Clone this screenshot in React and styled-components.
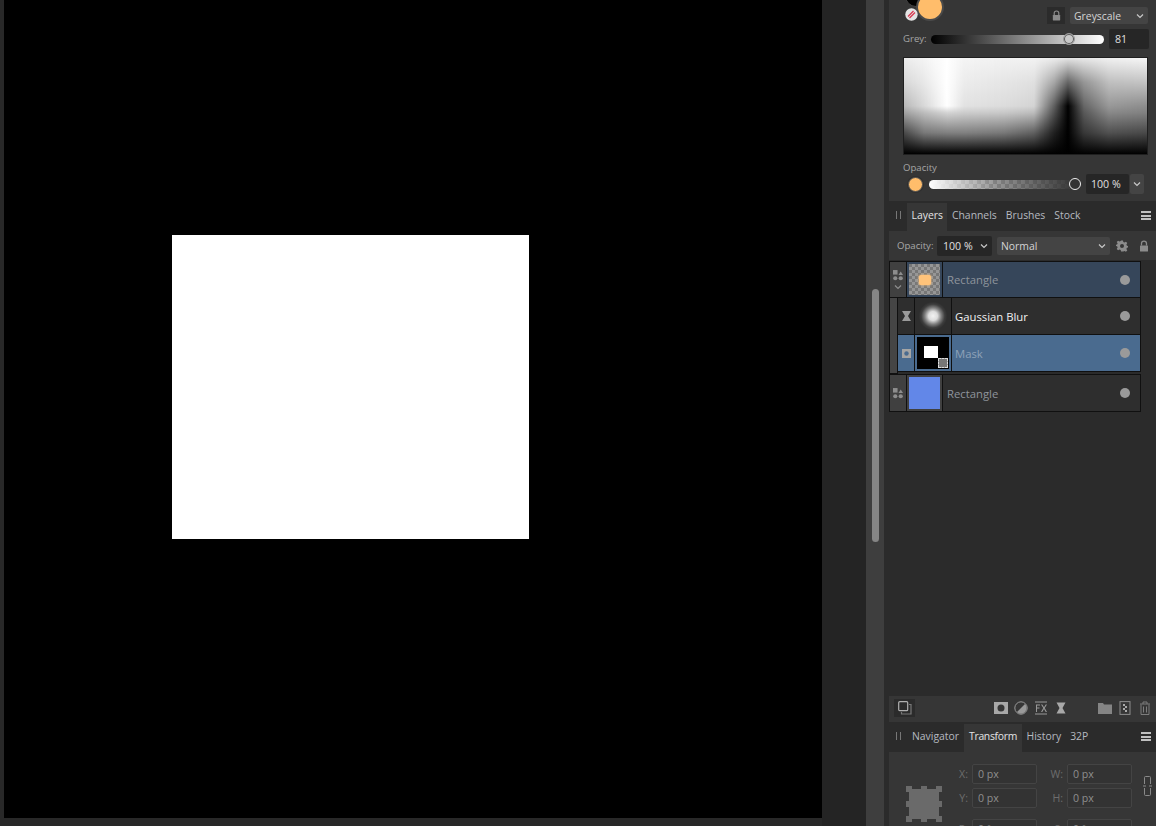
import React from "react";
import styled, { createGlobalStyle, css } from "styled-components";

const Global = createGlobalStyle`
  html, body { margin: 0; padding: 0; background: #2b2b2b; }
  * { box-sizing: border-box; }
  body { font-family: "Open Sans", "Noto Sans", "Liberation Sans", sans-serif; font-size: 10.4px; }
`;

const checker = (a, b, s) => css`
  background-color: ${a};
  background-image: conic-gradient(${b} 25%, transparent 0 50%, ${b} 0 75%, transparent 0);
  background-size: ${s}px ${s}px;
`;

const Root = styled.div`
  width: 1156px; height: 826px; display: flex; overflow: hidden; background: #232323;
`;
const CanvasColumn = styled.div`
  width: 822px; height: 826px; flex: none; padding: 0 0 8px 4px; background: #282828;
`;
const Canvas = styled.div`
  width: 818px; height: 818px; background: #000; padding: 235px 0 0 168px;
`;
const Page = styled.div`width: 357px; height: 304px; background: #fff;`;
const Gutter = styled.div`width: 44px; flex: none; background: #242424;`;
const ScrollTrack = styled.div`width: 18px; flex: none; background: #3e3e3e; padding: 289px 6px 0;`;
const ScrollThumb = styled.div`width: 7px; height: 253px; border-radius: 3.5px; background: #858585;`;
const Seam = styled.div`width: 5px; flex: none; background: #2b2b2b;`;
const Side = styled.div`width: 267px; height: 826px; flex: none; display: flex; flex-direction: column; background: #2b2b2b;`;

const ColourPanel = styled.section`height: 201px; flex: none; background: #363636; padding: 0 7px 0 14px; overflow: hidden;`;
const ColourTop = styled.div`height: 29px; display: flex; align-items: flex-start; padding-top: 7px;`;
const Swatches = styled.div`position: relative; width: 144px; height: 22px; flex: none;`;
const BackSwatch = styled.div`position: absolute; left: 2px; top: -22px; width: 22px; height: 22px; border-radius: 50%; background: #000; border: 1px solid #444;`;
const FrontSwatch = styled.div`position: absolute; left: 13px; top: -14px; width: 28px; height: 28px; border-radius: 50%; background: #ffbd6b; border: 2px solid #4a4a4a;`;
const NoneSwatch = styled.svg`position: absolute; left: 2px; top: 1px; width: 13px; height: 13px;`;
const LockBox = styled.div`width: 18px; height: 17px; display: flex; align-items: center; justify-content: center; background: #2b2b2b; margin-right: 5px;`;
const ModeSelect = styled.div`
  width: 78px; height: 17px; background: #444; color: #d4d4d4; padding: 0 4px; display: flex; align-items: center; justify-content: space-between; border-radius: 2px;
`;
const GreyRow = styled.div`height: 20px; display: flex; align-items: center;`;
const SmallLabel = styled.span`
  color: ${p => p.$c || "#a5a5a5"}; font-size: ${p => p.$s || 9.6}px; line-height: 12px; white-space: nowrap;
  width: ${p => p.$w ? `${p.$w}px` : "auto"}; flex: none;
`;
const GreyTrack = styled.div`
  position: relative; width: 173px; height: 9px; flex: none; border-radius: 4.5px; background: linear-gradient(90deg, #000, #fff);
`;
const GreyKnob = styled.div`
  position: absolute; left: 132px; top: -2px; width: 12px; height: 12px; border-radius: 50%; border: 1.5px solid #9a9a9a; background: #c8c8c8; box-shadow: inset 0 0 0 1px #555;
`;
const ValueBox = styled.div`
  width: ${p => p.$w}px; height: 20px; flex: none; background: #262626; color: #e0e0e0; border-radius: 2px; display: flex; align-items: center; justify-content: ${p => p.$between ? "space-between" : "flex-start"}; padding: 0 5px; font-size: 10.6px;
`;
const GreyValue = styled(ValueBox)`margin-left: 5px; padding-left: 6px;`;
const Picture = styled.svg`display: block; width: 245px; height: 98px; margin-top: 8px; border: 1px solid #1f1f1f;`;
const OpacityHead = styled.div`margin-top: 5px; height: 14px;`;
const OpacityRow = styled.div`height: 20px; display: flex; align-items: center;`;
const OpacityDot = styled.div`width: 15px; height: 15px; margin-left: 5px; border-radius: 50%; background: #ffbd6b; border: 1.5px solid #4f4f4f; box-shadow: 0 0 0 1px #2f2f2f; flex: none;`;
const OpacityTrack = styled.div`
  position: relative; width: 146px; height: 9px; margin-left: 6px; margin-right: 11px; border-radius: 4.5px; flex: none;
  background: linear-gradient(90deg, #fff, rgba(170,170,170,.35) 45%, rgba(50,50,50,.95)), repeating-conic-gradient(#8f8f8f 0 25%, #6b6b6b 0 50%) 0 0 / 8px 8px;
`;
const OpacityKnob = styled.div`
  position: absolute; right: -6px; top: -2px; width: 12px; height: 12px; border-radius: 50%; border: 1.5px solid #eee; background: #333;
`;
const DropButton = styled.div`width: 14px; height: 20px; margin-left: 1px; background: #444; display: flex; align-items: center; justify-content: center; border-radius: 2px;`;

const TabBar = styled.div`height: 30px; flex: none; display: flex; align-items: flex-end; background: #2b2b2b; padding-left: 7px; padding-right: 5px;`;
const Grip = styled.div`width: 5px; height: 8px; margin-bottom: 12px; border-left: 1px solid #777; border-right: 1px solid #777; margin-right: 6px; flex: none;`;
const Tab = styled.div`
  height: 28px; padding: 0 ${p => p.$pad ?? 5}px 4px; display: flex; align-items: center; font-size: 10.4px; white-space: nowrap;
  letter-spacing: ${p => p.$track || 0}px;
  color: ${p => p.$on ? "#e4e4e4" : "#b6bac0"}; background: ${p => p.$on ? "#363636" : "transparent"};
`;
const Burger = styled.div`
  margin-left: auto; margin-bottom: 11px; width: 10px; height: 9px; flex: none;
  border-top: 2px solid #c0c0c0; border-bottom: 2px solid #c0c0c0; position: relative;
  &::after { content: ""; position: absolute; left: 0; right: 0; top: 1.5px; height: 2px; background: #c0c0c0; }
`;

const Options = styled.div`height: 29px; flex: none; background: #363636; display: flex; align-items: center; padding-left: 8px;`;
const OpacityInput = styled(ValueBox)`margin-left: 4px; padding: 0 4px 0 6px;`;
const BlendSelect = styled(ModeSelect)`width: 113px; height: 18px; margin-left: 5px;`;
const OptionIcon = styled.svg`width: 12px; height: 12px; margin-left: ${p => p.$ml}px; flex: none;`;

const List = styled.div`flex: 1; min-height: 0; padding-top: 1px; display: flex; flex-direction: column; background: #2b2b2b;`;
const LayerRow = styled.div`
  width: 252px; height: ${p => p.$h || 37}px; flex: none; display: flex; align-items: stretch;
  border: 1px solid #101010; background: ${p => p.$bg || "#2e2e2e"};
`;
const Handle = styled.div`
  width: 17px; flex: none; background: #404040; border-right: 1px solid #101010; display: flex; flex-direction: column; align-items: center; justify-content: center; gap: 3px;
`;
const ThumbCell = styled.div`
  width: 36px; flex: none; padding: 2px; background: ${p => p.$bg || "#404040"}; border-right: 1px solid #101010;
`;
const Checker = styled.div`
  width: 100%; height: 100%; ${checker("#777", "#969696", 6)}; display: flex; align-items: center; justify-content: center;
`;
const GlowSquare = styled.div`width: 12px; height: 10px; border-radius: 2px; background: #ffc37a; box-shadow: 0 0 3px #ffc37a;`;
const BlueFill = styled.div`width: 100%; height: 100%; background: #6287e8;`;
const LayerName = styled.div`
  flex: 1; padding-left: ${p => p.$pl ?? 4}px; display: flex; align-items: center; font-size: 11.3px; color: ${p => p.$c || "#8e949c"};
`;
const Vis = styled.div`
  width: 10px; height: 10px; border-radius: 50%; background: #9a9a9a; margin: auto 10px auto 0; flex: none;
`;
const ChildGroup = styled.div`display: flex; flex-direction: column; width: 252px; flex: none;`;
const ChildRow = styled.div`
  height: 37px; display: flex; align-items: stretch; background: ${p => p.$bg}; border: 1px solid #101010; border-top-width: 0; margin-left: 8px;
`;
const ChildStrip = styled.div`position: absolute; left: 0; top: 0; bottom: 0; width: 9px; background: #454545; border: 1px solid #101010; border-top: 0;`;
const ChildWrap = styled.div`position: relative; height: 76px; flex: none;`;
const IconCell = styled.div`
  width: 17px; flex: none; display: flex; align-items: center; justify-content: center; border-right: 1px solid #101010; background: ${p => p.$bg || "#2e2e2e"};
`;
const WideThumb = styled.div`
  width: 37px; flex: none; padding: 2px; border-right: 1px solid #101010; background: ${p => p.$bg || "#2e2e2e"}; display: flex; align-items: center; justify-content: center;
`;
const BlurBall = styled.div`width: 30px; height: 30px; border-radius: 50%; background: radial-gradient(circle closest-side, #f2f2f2 0, #dcdcdc 30%, #808080 55%, #3e3e3e 78%, #2e2e2e 95%);`;
const MaskThumb = styled.div`position: relative; width: 100%; height: 100%; background: #000; display: flex; padding: 9px 0 0 7px;`;
const MaskWhite = styled.div`width: 14px; height: 12px; background: #fff;`;
const MaskBadge = styled.div`position: absolute; right: 1px; bottom: 1px; width: 10px; height: 10px; border: 1px dashed #ddd; background: #777;`;

const Footer = styled.div`height: 26px; flex: none; background: #363636; display: flex; align-items: center; padding: 0 0 3px 5px;`;
const FootMain = styled.div`width: 21px; height: 18px; background: #2b2b2b; display: flex; align-items: center; justify-content: center; margin-right: 79px; flex: none;`;
const FootIcon = styled.svg`width: 14px; height: 14px; flex: none; margin-right: ${p => p.$mr}px;`;

const Transform = styled.div`height: 74px; flex: none; background: #363636; overflow: hidden; padding: 12px 0 0 17px; display: flex;`;
const Anchor = styled.svg`width: 36px; height: 36px; margin-top: 22px; flex: none;`;
const Fields = styled.div`display: grid; grid-template-columns: 65px 65px; grid-auto-rows: 20px; column-gap: 30px; row-gap: 4px; margin-left: 30px; flex: none;`;
const Field = styled.div`
  position: relative; height: 20px; background: #333; border: 1px solid #444; border-radius: 2px; color: #8f8f8f; font-size: 10.6px; display: flex; align-items: center; padding-left: 5px;
  &::before { content: "${p => p.$l}"; position: absolute; right: 68px; color: #6d6d6d; font-size: 10.6px; }
  margin-top: ${p => p.$mt || 0}px;
`;
const Chain = styled.svg`width: 9px; height: 22px; margin: 11px 0 0 11px; flex: none;`;

const Chevron = ({ c = "#c8c8c8" }) => (
  <svg width="8" height="6" viewBox="0 0 8 6"><path d="M1 1.5 4 4.5 7 1.5" fill="none" stroke={c} strokeWidth="1.2" /></svg>
);
const Padlock = ({ c = "#8c8c8c", s = 12 }) => (
  <svg width={s} height={s} viewBox="0 0 12 12">
    <path d="M3.5 5.5V3.6a2.5 2.5 0 0 1 5 0v1.9" fill="none" stroke={c} strokeWidth="1.3" />
    <rect x="2" y="5.5" width="8" height="6" rx=".5" fill={c} />
  </svg>
);
const Dots = () => (
  <svg width="10" height="11" viewBox="0 0 11 12" fill="#8d8d8d">
    <rect x="0" y="0" width="5" height="5" />
    <path d="M8.500 1.500 11 5.500H6z" />
    <circle cx="2.500" cy="9" r="2.300" />
    <circle cx="8.500" cy="9" r="2.300" />
  </svg>
);

const xs = [0, 20, 43, 60, 100, 130, 150, 164, 180, 205, 245];
const rows = [
  [0, [0xec, 0xf4, 0xff, 0xf4, 0xf2, 0xf2, 0xec, 0xe4, 0xe8, 0xf0, 0xf6]],
  [0.25, [0xd8, 0xe8, 0xff, 0xec, 0xe6, 0xe0, 0xa8, 0x66, 0x96, 0xc0, 0xc4]],
  [0.5, [0xb8, 0xd8, 0xff, 0xe2, 0xdc, 0xd4, 0x60, 0x00, 0x66, 0x98, 0x8c]],
  [0.57, [0xa0, 0xbc, 0xd4, 0xcc, 0xc8, 0xbc, 0x50, 0x00, 0x58, 0x88, 0x80]],
  [0.78, [0x48, 0x78, 0x80, 0x80, 0x78, 0x60, 0x20, 0x00, 0x38, 0x50, 0x48]],
  [1, [0, 0, 0, 0, 0, 0, 0, 0, 0, 0, 0]],
];
const cols = Array.from({ length: 243 }, (_, i) => {
  const x = i + 0.5;
  let k = xs.findIndex((v, n) => x >= v && x <= xs[n + 1]);
  if (k < 0) k = xs.length - 2;
  const f = (x - xs[k]) / (xs[k + 1] - xs[k]);
  return rows.map(([t, v]) => {
    const g = Math.round(v[k] + (v[k + 1] - v[k]) * f);
    return [t, `rgb(${g},${g},${g})`];
  });
});
const GreyPicture = () => (
  <Picture viewBox="0 0 243 96" preserveAspectRatio="none" shapeRendering="crispEdges">
    <defs>
      {cols.map((stops, i) => (
        <linearGradient key={i} id={`c${i}`} x1="0" y1="0" x2="0" y2="1">
          {stops.map(([t, col]) => <stop key={t} offset={t} stopColor={col} />)}
        </linearGradient>
      ))}
    </defs>
    {cols.map((_, i) => <rect key={i} x={i} y="0" width="1" height="96" fill={`url(#c${i})`} />)}
  </Picture>
);

export default function App() {
  return (
    <Root>
      <Global />
      <CanvasColumn><Canvas><Page /></Canvas></CanvasColumn>
      <Gutter />
      <ScrollTrack><ScrollThumb /></ScrollTrack>
      <Seam />
      <Side>
        <ColourPanel>
          <ColourTop>
            <Swatches>
              <BackSwatch />
              <FrontSwatch />
              <NoneSwatch viewBox="0 0 13 13">
                <circle cx="6.500" cy="6.500" r="6.200" fill="#e4e4e4" />
                <path d="M3 8.500 8.500 3M4.500 10 10 4.500" stroke="#d8394f" strokeWidth="1.300" />
              </NoneSwatch>
            </Swatches>
            <LockBox><Padlock c="#8a8a8a" s={11} /></LockBox>
            <ModeSelect>Greyscale<Chevron /></ModeSelect>
          </ColourTop>
          <GreyRow>
            <SmallLabel $w={28}>Grey:</SmallLabel>
            <GreyTrack><GreyKnob /></GreyTrack>
            <GreyValue $w={40}>81</GreyValue>
          </GreyRow>
          <GreyPicture />
          <OpacityHead><SmallLabel>Opacity</SmallLabel></OpacityHead>
          <OpacityRow>
            <OpacityDot />
            <OpacityTrack><OpacityKnob /></OpacityTrack>
            <ValueBox $w={43}>100 %</ValueBox>
            <DropButton><Chevron /></DropButton>
          </OpacityRow>
        </ColourPanel>

        <TabBar>
          <Grip />
          <Tab $on $pad={4.5}>Layers</Tab>
          <Tab $pad={4.5}>Channels</Tab>
          <Tab $pad={4.5}>Brushes</Tab>
          <Tab $pad={4.5}>Stock</Tab>
          <Burger />
        </TabBar>
        <Options>
          <SmallLabel $c="#a8a8a8" $w={36}>Opacity:</SmallLabel>
          <OpacityInput $w={55} $between>100 %<Chevron /></OpacityInput>
          <BlendSelect>Normal<Chevron /></BlendSelect>
          <OptionIcon $ml={6} viewBox="0 0 12 12">
            <path fill="#8c8c8c" fillRule="evenodd" d="M5 .5h2l.3 1.600 1.200.5L9.900 1.700l1.400 1.400-.9 1.400.5 1.200 1.600.3v1.500l-1.600.3-.5 1.200.9 1.400-1.400 1.400-1.400-.9-1.200.5L7 11.500H5l-.3-1.600-1.200-.5-1.400.9L.7 8.900l.9-1.400-.5-1.200L-.5 6V5l1.600-.5.5-1.200-.9-1.400L2.100.7l1.400.9 1.200-.5zM6 4a2 2 0 1 0 0 4 2 2 0 0 0 0-4z" />
          </OptionIcon>
          <OptionIcon as="div" $ml={10}><Padlock /></OptionIcon>
        </Options>

        <List>
          <LayerRow $bg="#36465a">
            <Handle><Dots /><Chevron c="#8d8d8d" /></Handle>
            <ThumbCell $bg="#36465a"><Checker><GlowSquare /></Checker></ThumbCell>
            <LayerName>Rectangle</LayerName>
            <Vis />
          </LayerRow>
          <ChildWrap>
            <ChildStrip />
            <ChildGroup>
              <ChildRow $bg="#2e2e2e">
                <IconCell>
                  <svg width="9" height="10" viewBox="0 0 9 10"><path d="M0 0h9L6 5l3 5H0l3-5z" fill="#9a9a9a" /></svg>
                </IconCell>
                <WideThumb><BlurBall /></WideThumb>
                <LayerName $c="#f0f0f0" $pl={3}>Gaussian Blur</LayerName>
                <Vis />
              </ChildRow>
              <ChildRow $bg="#4a6b8f">
                <IconCell $bg="#4a6b8f">
                  <svg width="9" height="9" viewBox="0 0 9 9"><rect width="9" height="9" fill="#a5a5a5" /><circle cx="4.500" cy="4.500" r="2.200" fill="#4a6b8f" /></svg>
                </IconCell>
                <WideThumb $bg="#4a6b8f">
                  <MaskThumb><MaskWhite /><MaskBadge /></MaskThumb>
                </WideThumb>
                <LayerName $c="#8ea2b8" $pl={3}>Mask</LayerName>
                <Vis />
              </ChildRow>
            </ChildGroup>
          </ChildWrap>
          <LayerRow $h={38}>
            <Handle><Dots /></Handle>
            <ThumbCell><BlueFill /></ThumbCell>
            <LayerName>Rectangle</LayerName>
            <Vis />
          </LayerRow>
        </List>

        <Footer>
          <FootMain>
            <svg width="14" height="14" viewBox="0 0 14 14" fill="none" stroke="#b0b0b0" strokeWidth="1.200">
              <rect x=".7" y=".7" width="9" height="9" rx="1" />
              <path d="M11 3.500h2v9.500H3.500v-2" stroke="#777" />
            </svg>
          </FootMain>
          <FootIcon $mr={6} viewBox="0 0 14 14"><rect y="1" width="14" height="12" fill="#a8a8a8" /><circle cx="7" cy="7" r="3.500" fill="#363636" /></FootIcon>
          <FootIcon $mr={6} viewBox="0 0 14 14"><circle cx="7" cy="7" r="6.200" fill="none" stroke="#999" /><path d="M3 11 11 3A5.600 5.600 0 0 1 3 11z" fill="#999" /></FootIcon>
          <FootIcon $mr={6} viewBox="0 0 14 14"><path d="M1 1h12M1 13h12" stroke="#999" /><path d="M2 3.500h4v1H3v2h2.500v1H3V11H2zM7 3.500h1.300L10 6.300l1.700-2.800H13L10.700 7 13 11h-1.300L10 8 8.300 11H7l2.300-4z" fill="#999" /></FootIcon>
          <FootIcon $mr={30} viewBox="0 0 14 14"><path d="M2.500 1.500h9L8.500 7l3 5.500h-9l3-5.500z" fill="#a8a8a8" /></FootIcon>
          <FootIcon $mr={6} viewBox="0 0 14 14"><path d="M0 2h5l1 1.500h8V13H0z" fill="#858585" /></FootIcon>
          <FootIcon $mr={6} viewBox="0 0 14 14"><rect x="2" y=".6" width="10" height="12.800" fill="none" stroke="#8c8c8c" /><path d="M5 3h2v2H5zM7 5h2v2H7zM5 7h2v2H5zM7 9h2v2H7z" fill="#aaa" /></FootIcon>
          <FootIcon $mr={0} viewBox="0 0 14 14"><path d="M2 3h10M5 3V1h4v2M3 3.500V13.500h8V3.500M5.500 5.500v6M8.500 5.500v6" fill="none" stroke="#7d7d7d" /></FootIcon>
        </Footer>

        <TabBar>
          <Grip />
          <Tab $pad={5}>Navigator</Tab>
          <Tab $on $pad={5} $track={-0.3}>Transform</Tab>
          <Tab $pad={4.5}>History</Tab>
          <Tab $pad={4.5}>32P</Tab>
          <Burger />
        </TabBar>
        <Transform>
          <Anchor viewBox="0 0 36 36">
            <path fill="#6a6a6a" d="M0 0h6v3h9V0h6v3h9V0h6v6h-3v9h3v6h-3v9h3v6h-6v-3h-9v3h-6v-3H6v3H0v-6h3v-9H0v-6h3V6H0z" />
          </Anchor>
          <Fields>
            <Field $l="X:">0 px</Field>
            <Field $l="W:">0 px</Field>
            <Field $l="Y:">0 px</Field>
            <Field $l="H:">0 px</Field>
            <Field $l="R:" $mt={7}>0 °</Field>
            <Field $l="S:" $mt={7}>0 °</Field>
          </Fields>
          <Chain viewBox="0 0 9 22">
            <path d="M1.500 9V2.500a1 1 0 0 1 1-1h4a1 1 0 0 1 1 1V9M1.500 13v6.500a1 1 0 0 0 1 1h4a1 1 0 0 0 1-1V13M0 11h3M6 11h3" fill="none" stroke="#8a8a8a" />
          </Chain>
        </Transform>
      </Side>
    </Root>
  );
}
